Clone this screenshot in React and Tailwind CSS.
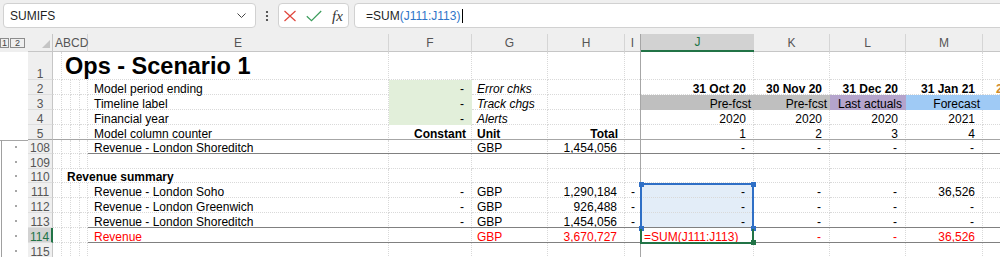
import React from 'react';

const COLS = ['A', 'B', 'C', 'D', 'E', 'F', 'G', 'H', 'I', 'J', 'K', 'L', 'M', 'N'];
const MERGED = ['A', 'BE', 'F', 'G', 'H', 'I', 'J', 'K', 'L', 'M', 'N'];
const W = {
  A: 'w-[9px]', B: 'w-[9px]', C: 'w-[9px]', D: 'w-[8px]', E: 'w-[301px]', BE: 'w-[327px]',
  F: 'w-[83px]', G: 'w-[76px]', H: 'w-[77px]', I: 'w-[15px]', J: 'w-[113px]',
  K: 'w-[76px]', L: 'w-[76px]', M: 'w-[77px]', N: 'w-[77px]',
};

const num = 'justify-end pr-[7px]';
const dash = 'justify-end pr-[8px]';
const lbl = 'pl-[6px]';
const unit = 'pl-[5px]';
const red = 'text-[#ff0000]';
const green = 'bg-[#e2efda]';
const grey = 'bg-[#bfbfbf]';
const blue = 'bg-[#9fcaf5]';
const sel = 'bg-[#e3edf8]';

const dashes = (c = '') => ({
  J: { t: '-', c: `${dash} ${c}` },
  K: { t: '-', c: `${dash} ${c}` },
  L: { t: '-', c: `${dash} ${c}` },
  M: { t: '-', c: `${dash} ${c}` },
  N: { t: '-', c: `${dash} ${c}` },
});

const rows = [
  { n: '1', h: 'h-[28px]', merged: true, cells: {
    BE: { t: 'Ops - Scenario 1', c: 'pl-[3px] font-bold text-[23.5px] leading-[26px]' },
  } },
  { n: '2', h: 'h-[15px]', cells: {
    E: { t: 'Model period ending', c: lbl },
    F: { t: '-', c: `${num} ${green}`, fill: true },
    G: { t: 'Error chks', c: `${unit} italic` },
    J: { t: '31 Oct 20', c: `${num} font-bold` },
    K: { t: '30 Nov 20', c: `${num} font-bold` },
    L: { t: '31 Dec 20', c: `${num} font-bold` },
    M: { t: '31 Jan 21', c: `${num} font-bold` },
    N: { t: '28 Feb 21', c: 'pl-[13px] font-bold text-[#d08a2a]' },
  } },
  { n: '3', h: 'h-[15px]', cells: {
    E: { t: 'Timeline label', c: lbl },
    F: { t: '-', c: `${num} ${green}`, fill: true },
    G: { t: 'Track chgs', c: `${unit} italic` },
    J: { t: 'Pre-fcst', c: `justify-end pr-[2px] ${grey}`, fill: true },
    K: { t: 'Pre-fcst', c: `justify-end pr-[2px] ${grey}`, fill: true },
    L: { t: 'Last actuals', c: 'justify-end pr-[3px] bg-[#b4a4cc]', fill: true },
    M: { t: 'Forecast', c: `justify-end pr-[2px] ${blue}`, fill: true },
    N: { t: 'Forecast', c: `justify-end pr-[2px] ${blue}`, fill: true },
  } },
  { n: '4', h: 'h-[15px]', cells: {
    E: { t: 'Financial year', c: lbl },
    F: { t: '-', c: `${num} ${green}`, fill: true },
    G: { t: 'Alerts', c: `${unit} italic` },
    J: { t: '2020', c: num },
    K: { t: '2020', c: num },
    L: { t: '2020', c: num },
    M: { t: '2021', c: num },
    N: { t: '2021', c: num },
  } },
  { n: '5', h: 'h-[15px]', line: 'all', cells: {
    E: { t: 'Model column counter', c: lbl },
    F: { t: 'Constant', c: 'justify-end pr-[5px] font-bold' },
    G: { t: 'Unit', c: `${unit} font-bold` },
    H: { t: 'Total', c: 'justify-end pr-[6px] font-bold' },
    J: { t: '1', c: num },
    K: { t: '2', c: num },
    L: { t: '3', c: num },
    M: { t: '4', c: num },
    N: { t: '5', c: num },
  } },
  { n: '108', h: 'h-[14px]', group: true, line: 'E', cells: {
    E: { t: 'Revenue - London Shoreditch', c: lbl },
    G: { t: 'GBP', c: unit },
    H: { t: '1,454,056', c: num },
    ...dashes(),
  } },
  { n: '109', h: 'h-[15px]', group: true, cells: {} },
  { n: '110', h: 'h-[14px]', group: true, merged: true, cells: {
    BE: { t: 'Revenue summary', c: 'pl-[5px] font-bold' },
  } },
  { n: '111', h: 'h-[15px]', group: true, cells: {
    E: { t: 'Revenue - London Soho', c: lbl },
    F: { t: '-', c: num },
    G: { t: 'GBP', c: unit },
    H: { t: '1,290,184', c: num },
    I: { t: '-', c: 'justify-end pr-[5px]' },
    ...dashes(),
    J: { t: '-', c: `${dash} ${sel}` },
    M: { t: '36,526', c: num },
  } },
  { n: '112', h: 'h-[15px]', group: true, cells: {
    E: { t: 'Revenue - London Greenwich', c: lbl },
    F: { t: '-', c: num },
    G: { t: 'GBP', c: unit },
    H: { t: '926,488', c: num },
    I: { t: '-', c: 'justify-end pr-[5px]' },
    ...dashes(),
    J: { t: '-', c: `${dash} ${sel}` },
  } },
  { n: '113', h: 'h-[15px]', group: true, line: 'E', cells: {
    E: { t: 'Revenue - London Shoreditch', c: lbl },
    F: { t: '-', c: num },
    G: { t: 'GBP', c: unit },
    H: { t: '1,454,056', c: num },
    I: { t: '-', c: 'justify-end pr-[5px]' },
    ...dashes(),
    J: { t: '-', c: `${dash} ${sel}` },
  } },
  { n: '114', h: 'h-[15px]', group: true, line: 'E', active: true, cells: {
    E: { t: 'Revenue', c: `${lbl} ${red}` },
    G: { t: 'GBP', c: `${unit} ${red}` },
    H: { t: '3,670,727', c: `${num} ${red}` },
    J: { t: '=SUM(J111:J113)', c: `pl-[3px] ${red}` },
    K: { t: '-', c: `${dash} ${red}` },
    L: { t: '-', c: `${dash} ${red}` },
    M: { t: '36,526', c: `${num} ${red}` },
  } },
  { n: '115', h: 'h-[15px]', group: true, cells: {} },
];

const solidDark = 'after:absolute after:left-0 after:-right-px after:-bottom-px after:h-px after:bg-[#808080]';
const solidLight = 'after:absolute after:left-0 after:-right-px after:-bottom-px after:h-px after:bg-[#a6a6a6]';

function Row({ r }) {
  const keys = r.merged ? MERGED : COLS;
  const allLine = r.line === 'all';
  return (
    <div className={`flex ${r.h}`}>
      <div className={`w-[28px] shrink-0 flex relative ${allLine ? solidLight : ''}`}>
        {r.group && (
          <>
            <span className="ml-[1px] w-px h-full bg-[#a0a0a0]" />
            <span className="ml-[13px] self-center w-[2px] h-[2px] bg-[#a6a6a6]" />
          </>
        )}
      </div>
      <div
        className={`w-[25px] shrink-0 flex items-end justify-center relative border-b ${
          r.active
            ? 'bg-[#d2d2d2] text-[#217346] border-r-2 border-r-[#217346]'
            : 'bg-[#efefef] text-[#555] border-r border-r-[#c6c6c6]'
        } ${allLine ? 'border-b-[#a6a6a6]' : 'border-b-[#dedede]'}`}
      >
        {r.n}
      </div>
      {keys.map((k) => {
        const c = r.cells[k] || {};
        const idx = COLS.indexOf(k === 'BE' ? 'B' : k);
        let line = '';
        if (allLine) line = solidLight;
        else if (r.line === 'E' && idx >= 4) line = solidDark;
        return (
          <React.Fragment key={k}>
            <div
              className={`${W[k]} shrink-0 flex items-end whitespace-nowrap relative border-b border-dotted ${
                c.fill ? 'border-transparent' : 'border-[#d9d9d9]'
              } ${k === 'I' ? '' : 'border-r'} ${line} ${c.c || ''}`}
            >
              {c.t}
            </div>
            {k === 'I' && <div className="w-px shrink-0 bg-[#a6a6a6]" />}
          </React.Fragment>
        );
      })}
    </div>
  );
}

function HeaderRow() {
  const hc = 'shrink-0 flex items-center justify-center border-r border-b border-[#d5d5d5] border-b-[#c6c6c6]';
  return (
    <div className="flex h-[18px] bg-[#efefef] text-[#555] leading-[14px]">
      <div className="w-[28px] shrink-0 flex items-start pt-[4px] gap-[1px]">
        <span className="w-[9px] h-[10px] border border-[#8c8c8c] text-[9px] leading-[8px] flex items-center justify-center text-[#444]">1</span>
        <span className="w-[15px] h-[10px] border border-[#8c8c8c] text-[9px] leading-[8px] flex items-center justify-center text-[#444]">2</span>
      </div>
      <div className="w-[25px] shrink-0 relative border-r border-b border-[#c6c6c6] flex items-end justify-end pr-[2px] pb-[3px]">
        <svg width="8" height="8" viewBox="0 0 8 8">
          <polygon points="8,0 8,8 0,8" fill="#c4c4c4" />
        </svg>
      </div>
      <div className={`w-[35px] ${hc} justify-start! pl-[2px]`}>ABCD</div>
      <div className={`w-[301px] ${hc}`}>E</div>
      <div className={`w-[83px] ${hc}`}>F</div>
      <div className={`w-[76px] ${hc}`}>G</div>
      <div className={`w-[77px] ${hc}`}>H</div>
      <div className="w-[15px] shrink-0 flex items-center justify-center border-b border-[#c6c6c6]">I</div>
      <div className="w-px shrink-0 bg-[#a6a6a6]" />
      <div className="w-[113px] shrink-0 flex items-center justify-center bg-[#d2d2d2] text-[#217346] border-b-2 border-[#217346]">J</div>
      <div className={`w-[76px] ${hc}`}>K</div>
      <div className={`w-[76px] ${hc}`}>L</div>
      <div className={`w-[77px] ${hc}`}>M</div>
      <div className={`w-[77px] ${hc}`}>N</div>
    </div>
  );
}

function FormulaBar() {
  return (
    <div className="h-[34px] bg-[#efefef] flex items-start pt-[3px] pl-[3px]">
      <div className="w-[253px] h-[25px] shrink-0 bg-white border border-[#d1d1d1] rounded-[4px] flex items-center pl-[6px] pr-[9px]">
        <span className="flex-1 text-[#1f1f1f]">SUMIFS</span>
        <svg width="9" height="5" viewBox="0 0 9 5">
          <path d="M0.5 0.5 L4.5 4.5 L8.5 0.5" fill="none" stroke="#444" strokeWidth="1" />
        </svg>
      </div>
      <div className="w-[22px] h-[25px] shrink-0 flex items-center justify-center">
        <svg width="4" height="12" viewBox="0 0 4 12">
          <circle cx="2" cy="2" r="1.1" fill="#333" />
          <circle cx="2" cy="6" r="1.1" fill="#333" />
          <circle cx="2" cy="10" r="1.1" fill="#333" />
        </svg>
      </div>
      <div className="w-[71px] h-[25px] shrink-0 bg-white border border-[#d1d1d1] rounded-[4px] flex items-center pl-[4px]">
        <svg width="14" height="12" viewBox="0 0 14 12">
          <path d="M1.5 1 L12.5 11 M12.5 1 L1.5 11" stroke="#e0453c" strokeWidth="1.2" fill="none" />
        </svg>
        <svg className="ml-[9px]" width="16" height="12" viewBox="0 0 16 12">
          <path d="M0.8 6.2 L5.5 10.6 L15.2 1" stroke="#3a9c5b" strokeWidth="1.2" fill="none" />
        </svg>
        <span className="ml-[10px] font-['Liberation_Serif',serif] italic text-[15px] text-[#333] leading-[16px]">fx</span>
      </div>
      <div className="ml-[5px] w-[660px] h-[25px] shrink-0 bg-white border border-[#d1d1d1] rounded-[4px] flex items-center pl-[11px]">
        <span className="text-[#1f1f1f]">=SUM</span>
        <span className="text-[#2f75c8]">(J111:J113)</span>
        <span className="ml-[2px] w-px h-[14px] bg-black" />
      </div>
    </div>
  );
}

export default function App() {
  return (
    <div className="relative w-[1000px] h-[257px] overflow-hidden bg-white font-['Liberation_Sans',Arial,sans-serif] text-[12px] leading-[10px] text-black">
      <FormulaBar />
      <HeaderRow />
      {rows.map((r) => (
        <Row key={r.n} r={r} />
      ))}

      {/* range being referenced */}
      <div className="absolute left-[640px] top-[183px] w-[114px] h-[45px] border-t-2 border-x-2 border-[#2f6fc6]" />
      <div className="absolute left-[639px] top-[182px] w-[5px] h-[5px] bg-[#2f6fc6]" />
      <div className="absolute left-[751px] top-[182px] w-[5px] h-[5px] bg-[#2f6fc6]" />
      <div className="absolute left-[639px] top-[226px] w-[5px] h-[5px] bg-[#2f6fc6]" />
      <div className="absolute left-[751px] top-[226px] w-[5px] h-[5px] bg-[#2f6fc6]" />

      {/* active cell */}
      <div className="absolute left-[640px] top-[229px] w-[114px] h-[15px] border-x-2 border-b-2 border-[#217346]" />
      <div className="absolute left-[751px] top-[240px] w-[5px] h-[5px] bg-[#217346]" />
    </div>
  );
}
